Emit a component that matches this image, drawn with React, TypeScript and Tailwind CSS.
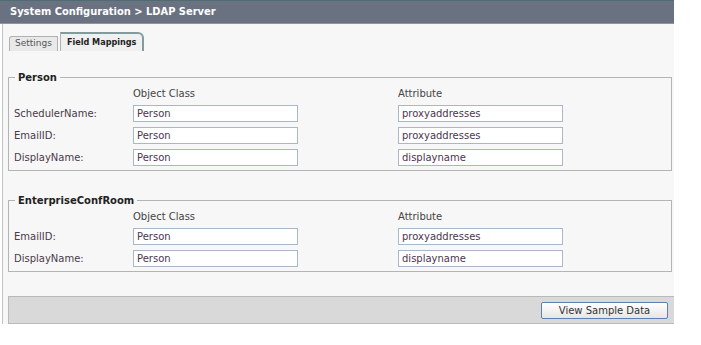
const font = { fontFamily: '"DejaVu Sans", Verdana, sans-serif' };
const narrow = { fontFamily: '"DejaVu Sans Condensed", "DejaVu Sans", Tahoma, sans-serif' };

type Row = { label: string; objectClass: string; attribute: string };

const person: Row[] = [
  { label: 'SchedulerName:', objectClass: 'Person', attribute: 'proxyaddresses' },
  { label: 'EmailID:', objectClass: 'Person', attribute: 'proxyaddresses' },
  { label: 'DisplayName:', objectClass: 'Person', attribute: 'displayname' },
];

const confRoom: Row[] = [
  { label: 'EmailID:', objectClass: 'Person', attribute: 'proxyaddresses' },
  { label: 'DisplayName:', objectClass: 'Person', attribute: 'displayname' },
];

function TextBox({ value }: { value: string }) {
  return (
    <input
      readOnly
      value={value}
      className="w-[165px] h-[17px] border border-[#a9b8c8] bg-white px-[3px] text-[10px] text-[#4b3650] outline-none"
      style={font}
    />
  );
}

function MappingGroup({ title, rows }: { title: string; rows: Row[] }) {
  return (
    <fieldset className="border border-[#b4b4b4] mr-[2px] pb-[4px]">
      <legend className="ml-[6px] px-[3px] text-[10px] font-bold text-[#222]">{title}</legend>
      <div className="grid grid-cols-[119px_265px_1fr] pl-[5px] pt-[3px] gap-y-[5px] text-[10px] text-[#444]">
        <div className="h-[12px]" />
        <div className="h-[12px] leading-[12px]">Object Class</div>
        <div className="h-[12px] leading-[12px]">Attribute</div>
        {rows.map((r, i) => (
          <div key={i} className="contents">
            <div className="h-[17px] leading-[17px] text-[#4a3a4a]">{r.label}</div>
            <div><TextBox value={r.objectClass} /></div>
            <div><TextBox value={r.attribute} /></div>
          </div>
        ))}
      </div>
    </fieldset>
  );
}

export default function App() {
  return (
    <div className="w-[701px] h-[345px] bg-white" style={font}>
      <div className="w-[674px]">
        <div className="h-[24px] bg-[#6a7282] border-t border-[#4d6d72] border-b border-b-[#8d95a2] flex items-center pl-[10px]">
          <span className="text-white text-[11px] font-bold" style={narrow}>
            System Configuration &gt; LDAP Server
          </span>
        </div>

        <div className="ml-[2px] border-l border-[#c4c4c4] bg-[#f7f7f7] pl-[5px] pt-[8px]">
          <div className="flex items-end gap-[2px] pl-[1px] h-[19px]">
            <div className="h-[15px] px-[5px] flex items-center border border-b-0 border-[#b0b0b0] rounded-tl-[3px] bg-[#e9e9e9] text-[9px] text-[#555]">
              Settings
            </div>
            <div
              className="h-[19px] pl-[6px] pr-[6px] flex items-center border-l border-[#b0b0b0] border-t-2 border-t-[#809c9c] border-r-2 border-r-[#809c9c] rounded-tr-[6px] bg-[#f0f0f0] text-[9px] font-bold text-[#222]"
              style={narrow}
            >
              Field Mappings
            </div>
          </div>

          <div className="mt-[19px]">
            <MappingGroup title="Person" rows={person} />
          </div>
          <div className="mt-[22px]">
            <MappingGroup title="EnterpriseConfRoom" rows={confRoom} />
          </div>

          <div className="mt-[24px] h-[28px] bg-[#d9d9d9] border border-[#b9b9b9] border-r-0 flex items-center justify-end pr-[6px]">
            <button
              className="w-[127px] h-[17px] border border-[#5f7fae] rounded-[2px] bg-gradient-to-b from-white to-[#e6e6e6] text-[10px] text-[#333]"
              style={font}
            >
              View Sample Data
            </button>
          </div>
        </div>
      </div>
    </div>
  );
}
